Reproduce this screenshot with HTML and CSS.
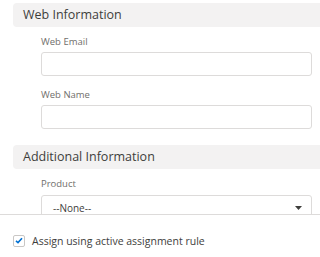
FILE: index.html
```html
<!DOCTYPE html>
<html lang="en">
<head>
    <meta charset="UTF-8">
    <meta name="viewport" content="width=device-width, initial-scale=1.0">
    <title>Lead Form</title>
    <link rel="stylesheet" href="styles.css">
</head>
<body>
    <div class="modal-body">
        <h3 class="section-title">Web Information</h3>
        <div class="field">
            <label for="webEmail">Web Email</label>
            <input type="text" id="webEmail">
        </div>
        <div class="field">
            <label for="webName">Web Name</label>
            <input type="text" id="webName">
        </div>

        <h3 class="section-title">Additional Information</h3>
        <div class="field">
            <label for="product">Product</label>
            <div class="select">
                <span>--None--</span>
                <svg width="7" height="4" viewBox="0 0 7 4"><path d="M0 0 L7 0 L3.5 4 Z" fill="#3e3e3c"/></svg>
            </div>
        </div>
    </div>

    <div class="modal-footer">
        <label class="check">
            <span class="box">
                <svg width="8" height="7" viewBox="0 0 8 7"><path d="M1 3.8 L3 5.6 L7 1.2" fill="none" stroke="#0070d2" stroke-width="1.6"/></svg>
            </span>
            Assign using active assignment rule
        </label>
    </div>
</body>
</html>
```

FILE: styles.css
```css
body {
    font-family: "Open Sans", Arial, sans-serif;
    margin: 0;
    padding: 0;
    background: white;
    color: #3e3e3c;
}
.modal-body {
    height: 211px;
    padding-top: 3px;
    overflow: hidden;
}
.section-title {
    margin: 0 0 0 13px;
    height: 24px;
    line-height: 24px;
    padding-left: 10px;
    background-color: #f3f2f2;
    border-radius: 4px 0 0 4px;
    font-size: 12.5px;
    font-weight: normal;
    color: #3e3e3c;
}
.field + .section-title {
    margin-top: 16px;
}
.field {
    margin: 8px 8px 12px 41px;
}
.field label {
    display: block;
    font-size: 9.5px;
    line-height: 14px;
    color: #706e6b;
    margin-bottom: 3px;
}
.field input {
    display: block;
    box-sizing: border-box;
    width: 100%;
    height: 24px;
    margin: 0;
    border: 1px solid #dddbda;
    border-radius: 3px;
}
.select {
    box-sizing: border-box;
    height: 26px;
    margin-top: 4px;
    border: 1px solid #dddbda;
    border-radius: 3px;
    display: flex;
    align-items: center;
    justify-content: space-between;
    padding: 0 9px 0 11px;
    font-size: 10px;
    color: #3e3e3c;
}
.modal-footer {
    border-top: 1px solid #dddbda;
    height: 42px;
    display: flex;
    align-items: center;
    padding-left: 13px;
}
.check {
    display: flex;
    align-items: center;
    gap: 7px;
    font-size: 10.5px;
    color: #3e3e3c;
    margin-top: 9px;
}
.box {
    box-sizing: border-box;
    width: 12px;
    height: 12px;
    border: 1px solid #c9c7c5;
    border-radius: 2px;
    display: flex;
    align-items: center;
    justify-content: center;
}
```
